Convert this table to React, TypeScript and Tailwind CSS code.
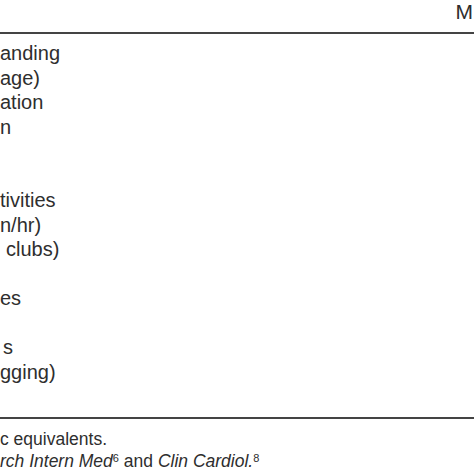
const ROWS: { text: string; pad?: string }[] = [
  { text: "anding" },
  { text: "age)" },
  { text: "ation" },
  { text: "n" },
  { text: "" },
  { text: "" },
  { text: "tivities" },
  { text: "n/hr)" },
  { text: "clubs)", pad: "pl-[6px]" },
  { text: "" },
  { text: "es" },
  { text: "" },
  { text: "s", pad: "pl-[3px]" },
  { text: "gging)" },
];

export default function App() {
  return (
    <div className="w-[474px] h-[474px] overflow-hidden bg-white text-[#2e2e2e] font-['Liberation_Sans',Arial,sans-serif]">
      {/* header */}
      <div className="h-[32px] flex justify-end pr-[1px] pt-[2px]">
        <span className="text-[21px] leading-[20px]">M</span>
      </div>
      <div className="h-[2px] bg-[#444]" />

      {/* body rows */}
      <div className="pt-[7px] pb-[33px]">
        {ROWS.map((r, i) => (
          <div key={i} className={`h-[24.5px] text-[20px] leading-[24.5px] whitespace-nowrap ${r.pad ?? ""}`}>
            {r.text}
          </div>
        ))}
      </div>
      <div className="h-[2px] bg-[#444]" />

      {/* footnotes */}
      <div className="pt-[9px] text-[17.5px] leading-[22px] whitespace-nowrap">
        <div>c equivalents.</div>
        <div>
          <i>rch Intern Med</i>
          <sup className="text-[11px]">6</sup> and <i>Clin Cardiol.</i>
          <sup className="text-[11px]">8</sup>
        </div>
      </div>
    </div>
  );
}
